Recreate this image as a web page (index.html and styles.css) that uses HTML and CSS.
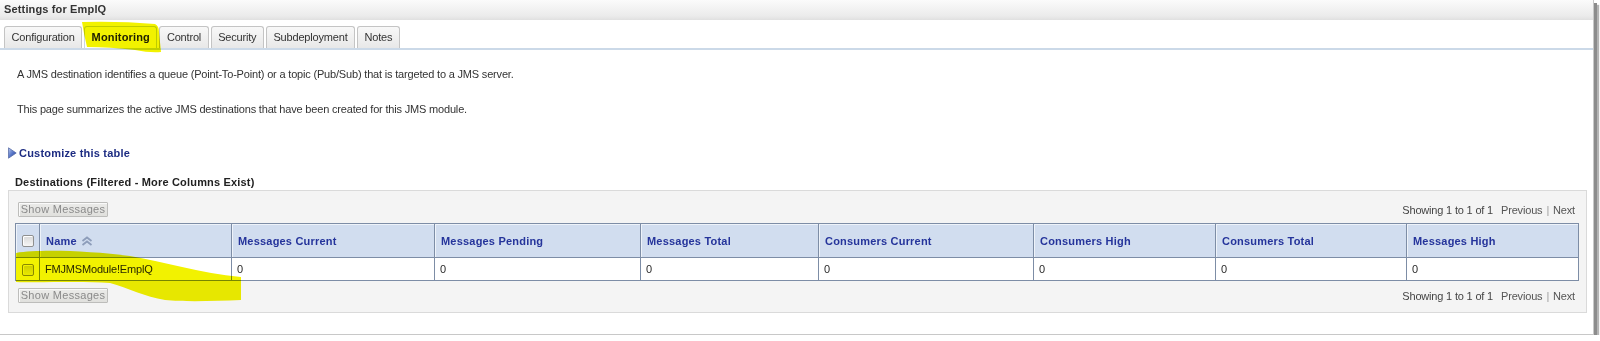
FILE: index.html
```html
<!DOCTYPE html>
<html lang="en">
<head>
<meta charset="utf-8">
<title>Settings for EmplQ</title>
<link rel="stylesheet" href="styles.css">
</head>
<body>
<div class="page">
  <div class="titlebar">Settings for EmplQ</div>
  <div class="tabs">
    <div class="tab">Configuration</div>
    <div class="tab active">Monitoring</div>
    <div class="tab">Control</div>
    <div class="tab">Security</div>
    <div class="tab">Subdeployment</div>
    <div class="tab">Notes</div>
  </div>
  <p class="intro">A JMS destination identifies a queue (Point-To-Point) or a topic (Pub/Sub) that is targeted to a JMS server.</p>
  <p class="intro second">This page summarizes the active JMS destinations that have been created for this JMS module.</p>
  <div class="customize">
    <svg class="tri" width="10" height="12" viewBox="0 0 10 12">
      <defs>
        <linearGradient id="tg" x1="0" y1="0" x2="1" y2="1">
          <stop offset="0" stop-color="#b9c9ee"/>
          <stop offset="0.5" stop-color="#5876c8"/>
          <stop offset="1" stop-color="#263f9a"/>
        </linearGradient>
      </defs>
      <path d="M1.5 0.8 L9.2 6 L1.5 11.2 Z" fill="url(#tg)" stroke="#5a6fa8" stroke-width="0.8" stroke-linejoin="round"/>
    </svg>
    <span>Customize this table</span>
  </div>
  <div class="table-title">Destinations (Filtered - More Columns Exist)</div>
  <div class="table-box">
    <div class="controls">
      <button class="btn" disabled>Show Messages</button>
      <div class="pager"><span class="showing">Showing 1 to 1 of 1</span><span class="link">Previous</span><span class="sep">|</span><span class="link">Next</span></div>
    </div>
    <table class="grid">
      <colgroup>
        <col class="c-check">
        <col class="c-name">
        <col class="c-mc">
        <col class="c-mp">
        <col class="c-mt">
        <col class="c-cc">
        <col class="c-ch">
        <col class="c-ct">
        <col class="c-mh">
      </colgroup>
      <thead>
        <tr>
          <th class="chk"><span class="checkbox"></span></th>
          <th>Name <svg class="sort" width="12" height="10" viewBox="0 0 12 10"><path d="M1.5 5 L6 1.5 L10.5 5 M1.5 9 L6 5.5 L10.5 9" fill="none" stroke="#8d9dba" stroke-width="1.8"/></svg></th>
          <th>Messages Current</th>
          <th>Messages Pending</th>
          <th>Messages Total</th>
          <th>Consumers Current</th>
          <th>Consumers High</th>
          <th>Consumers Total</th>
          <th>Messages High</th>
        </tr>
      </thead>
      <tbody>
        <tr>
          <td class="chk"><span class="checkbox"></span></td>
          <td>FMJMSModule!EmplQ</td>
          <td>0</td>
          <td>0</td>
          <td>0</td>
          <td>0</td>
          <td>0</td>
          <td>0</td>
          <td>0</td>
        </tr>
      </tbody>
    </table>
    <div class="controls bottom">
      <button class="btn" disabled>Show Messages</button>
      <div class="pager"><span class="showing">Showing 1 to 1 of 1</span><span class="link">Previous</span><span class="sep">|</span><span class="link">Next</span></div>
    </div>
  </div>
  <svg class="marker" width="1594" height="335" viewBox="0 0 1594 335">
    <path d="M82,22 Q120,21 155,24 Q159,26 159,32 L161,52 Q150,53 135,50 Q110,47 87,47 Q84,35 82,22 Z" fill="#f2f200"/>
    <path d="M16,253 C40,249 90,251 130,256 C165,262 200,273 241,277 L241,300 C215,301 185,302 165,300 C145,297 128,288 110,283 C80,281 40,283 16,282 Z" fill="#f2f200"/>
  </svg>
</div>
</body>
</html>
```

FILE: styles.css
```css
html, body {
  margin: 0;
  padding: 0;
  background: #ffffff;
}

body {
  font-family: "Liberation Sans", Arial, sans-serif;
  font-size: 11px;
  letter-spacing: -0.18px;
  color: #333333;
}

.page {
  position: relative;
  width: 1593px;
  height: 334px;
  background: #ffffff;
  border-right: 1px solid #c8c8c8;
  border-bottom: 1px solid #c8c8c8;
  box-shadow: 3px 3px 0 #8c8c8c, 5px 5px 1px #b4b4b4;
}

.titlebar {
  height: 20px;
  line-height: 19px;
  padding-left: 4px;
  font-weight: bold;
  letter-spacing: 0.15px;
  color: #333333;
  background: linear-gradient(#fbfbfb, #ebebeb 80%, #e0e0e0);
}

.tabs {
  display: flex;
  gap: 2px;
  padding: 6px 0 0 4px;
  border-bottom: 2px solid #cbd9e8;
  height: 22px;
}

.tab {
  box-sizing: border-box;
  height: 22px;
  line-height: 20px;
  padding: 0 6.5px;
  border: 1px solid #c4c4c4;
  border-bottom: none;
  border-radius: 3px 3px 0 0;
  background: linear-gradient(#f8f8f8, #e8e8e8);
  color: #333333;
}

.tab.active {
  background: #ffffff;
  font-weight: bold;
  letter-spacing: 0.15px;
  color: #222222;
  border-color: #c9d6e6;
}

.intro {
  margin: 17px 0 0 0;
  padding-left: 17px;
  line-height: 14px;
}

.intro.second {
  margin-top: 21px;
}

.customize {
  display: flex;
  align-items: center;
  gap: 2px;
  margin-top: 30px;
  padding-left: 7px;
  height: 14px;
  font-weight: bold;
  letter-spacing: 0.2px;
  color: #1d2c82;
}

.tri {
  display: block;
}

.table-title {
  margin-top: 15px;
  padding-left: 15px;
  line-height: 14px;
  font-weight: bold;
  letter-spacing: 0.18px;
  color: #222222;
}

.table-box {
  box-sizing: border-box;
  width: 1579px;
  margin: 1px 0 0 8px;
  padding: 11px 8px 9px 6px;
  background: #f4f4f4;
  border: 1px solid #dadada;
}

.controls {
  display: flex;
  justify-content: space-between;
  align-items: center;
  height: 15px;
  margin: 0 3px 0 3px;
}

.controls.bottom {
  margin-top: 7px;
}

.btn {
  box-sizing: border-box;
  width: 90px;
  height: 15px;
  padding: 0;
  font-family: "Liberation Sans", Arial, sans-serif;
  font-size: 11px;
  letter-spacing: 0.3px;
  line-height: 13px;
  color: #8a8a8a;
  background: linear-gradient(#ebebe9, #e0e0dd);
  border: 1px solid #bdbdbb;
  border-radius: 1px;
  box-shadow: inset 1px 1px 0 #fafafa;
}

.pager {
  display: flex;
  align-items: center;
  color: #444444;
}

.pager .showing {
  margin-right: 8px;
}

.pager .link {
  color: #555555;
}

.pager .sep {
  color: #a0a0a0;
  margin: 0 4px;
}

.grid {
  margin-top: 6px;
  width: 1563px;
  table-layout: fixed;
  border-collapse: collapse;
  border: 1px solid #7d8da6;
  background: #ffffff;
}

.c-check { width: 24px; }
.c-name { width: 192px; }
.c-mc { width: 203px; }
.c-mp { width: 206px; }
.c-mt { width: 178px; }
.c-cc { width: 215px; }
.c-ch { width: 182px; }
.c-ct { width: 191px; }
.c-mh { width: 172px; }

.grid th {
  height: 33px;
  padding: 0 0 0 6px;
  text-align: left;
  font-weight: bold;
  letter-spacing: 0.2px;
  color: #25349b;
  background: #d1ddef;
  border: 1px solid #7d8da6;
  box-shadow: inset 1px 1px 0 #eef3fa;
  white-space: nowrap;
}

.grid td {
  height: 22px;
  padding: 0 0 0 5px;
  color: #2a2a2a;
  border: 1px solid #7d8da6;
  white-space: nowrap;
}

.grid .chk {
  padding: 0;
  text-align: center;
}

.checkbox {
  display: inline-block;
  box-sizing: border-box;
  width: 12px;
  height: 12px;
  vertical-align: middle;
  border: 1px solid #8f9090;
  border-radius: 2px;
  background: linear-gradient(#d8d8d8, #f6f6f6);
  box-shadow: inset 1px 1px 0 #ffffff;
}

.sort {
  vertical-align: -1px;
  margin-left: 1px;
}

.marker {
  position: absolute;
  left: 0;
  top: 0;
  pointer-events: none;
  mix-blend-mode: multiply;
}
```
